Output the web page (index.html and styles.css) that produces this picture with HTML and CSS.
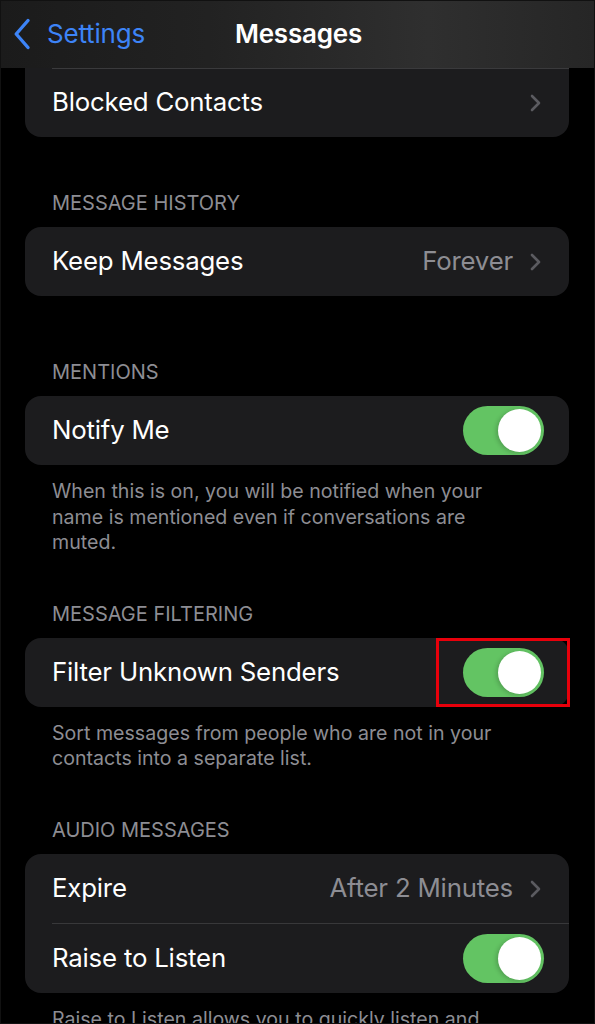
FILE: index.html
```html
<!DOCTYPE html>
<html lang="en">
<head>
<meta charset="utf-8">
<title>Messages</title>
<link rel="stylesheet" href="styles.css">
</head>
<body>
<header class="nav">
  <div class="back">
    <svg class="back-chev" viewBox="0 0 18 32" width="18" height="32"><path d="M15 2.5 L3.2 16 L15 29.5" fill="none" stroke="#3d84f7" stroke-width="3.4" stroke-linecap="round" stroke-linejoin="round"/></svg>
    <span class="back-label">Settings</span>
  </div>
  <h1 class="title">Messages</h1>
</header>

<main class="list">
  <section class="group group-first">
    <div class="card card-cut">
      <div class="row">
        <span class="label">Blocked Contacts</span>
        <span class="accessory"><svg class="chev" viewBox="0 0 11 18" width="11" height="18"><path d="M2 2 L9 9 L2 16" fill="none" stroke="#5b5b60" stroke-width="2.6" stroke-linecap="round" stroke-linejoin="round"/></svg></span>
      </div>
    </div>
  </section>

  <section class="group group-near">
    <h2 class="group-header">MESSAGE HISTORY</h2>
    <div class="card">
      <div class="row">
        <span class="label">Keep Messages</span>
        <span class="accessory"><span class="value">Forever</span><svg class="chev" viewBox="0 0 11 18" width="11" height="18"><path d="M2 2 L9 9 L2 16" fill="none" stroke="#5b5b60" stroke-width="2.6" stroke-linecap="round" stroke-linejoin="round"/></svg></span>
      </div>
    </div>
  </section>

  <section class="group group-wide">
    <h2 class="group-header">MENTIONS</h2>
    <div class="card">
      <div class="row">
        <span class="label">Notify Me</span>
        <span class="toggle"><span class="knob"></span></span>
      </div>
    </div>
    <p class="group-footer">When this is on, you will be notified when your name is mentioned even if conversations are muted.</p>
  </section>

  <section class="group group-after-footer">
    <h2 class="group-header">MESSAGE FILTERING</h2>
    <div class="card">
      <div class="row">
        <span class="label">Filter Unknown Senders</span>
        <span class="toggle"><span class="knob"></span></span>
        <span class="highlight"></span>
      </div>
    </div>
    <p class="group-footer">Sort messages from people who are not in your contacts into a separate list.</p>
  </section>

  <section class="group group-after-footer">
    <h2 class="group-header">AUDIO MESSAGES</h2>
    <div class="card">
      <div class="row row-sep">
        <span class="label">Expire</span>
        <span class="accessory"><span class="value">After 2 Minutes</span><svg class="chev" viewBox="0 0 11 18" width="11" height="18"><path d="M2 2 L9 9 L2 16" fill="none" stroke="#5b5b60" stroke-width="2.6" stroke-linecap="round" stroke-linejoin="round"/></svg></span>
      </div>
      <div class="row">
        <span class="label">Raise to Listen</span>
        <span class="toggle"><span class="knob"></span></span>
      </div>
    </div>
    <p class="group-footer">Raise to Listen allows you to quickly listen and reply to incoming audio messages by raising the phone to your ear.</p>
  </section>
</main>
</body>
</html>
```

FILE: styles.css
```css
* { box-sizing: border-box; }

html, body {
  margin: 0;
  padding: 0;
  background: #000;
}

body {
  width: 595px;
  height: 1024px;
  overflow: hidden;
  font-family: "Inter", "Noto Sans", sans-serif;
  color: #fff;
  border: 1px solid #111;
}

.nav {
  height: 67px;
  display: flex;
  align-items: center;
  justify-content: center;
  position: relative;
  background: linear-gradient(90deg, #1b1b1b 0%, #222 35%, #2f2f2f 72%, #262626 100%);
}

.back {
  position: absolute;
  left: 12px;
  top: 0;
  height: 67px;
  display: flex;
  align-items: center;
  gap: 16px;
}

.back-chev { display: block; margin-top: -2px; }

.back-label {
  color: #3d84f7;
  font-size: 26px;
  letter-spacing: -0.2px;
  margin-top: -2px;
}

.title {
  margin: 0 0 0 2px;
  font-size: 26px;
  font-weight: 600;
  letter-spacing: -0.2px;
  margin-top: -2px;
}

.list {
  padding: 0 25px 0 24px;
}

.group-first { margin-top: 0; }
.group-near { margin-top: 54px; }
.group-wide { margin-top: 64px; }
.group-after-footer { margin-top: 46px; }

.group-header {
  margin: 0 0 12px 0;
  padding-left: 27px;
  font-size: 20px;
  font-weight: 400;
  line-height: 24px;
  color: #8d8d93;
  letter-spacing: 0;
}

.card {
  background: #1c1c1e;
  border-radius: 16px;
}

.card-cut {
  border-radius: 0 0 16px 16px;
  position: relative;
}

.card-cut::before {
  content: "";
  position: absolute;
  top: 0;
  left: 27px;
  right: 0;
  height: 1px;
  background: #3a3a3c;
}

.row {
  position: relative;
  height: 69px;
  display: flex;
  align-items: center;
  justify-content: space-between;
  padding: 0 27px 0 27px;
}

.row-sep { height: 70px; }
.row-sep::after {
  content: "";
  position: absolute;
  left: 27px;
  right: 0;
  bottom: 0;
  height: 1px;
  background: #38383a;
}

.label {
  font-size: 25.8px;
  letter-spacing: -0.2px;
  margin-top: -2px;
}

.accessory {
  display: flex;
  align-items: center;
  gap: 17px;
  margin-right: 1px;
}

.value {
  color: #8d8d93;
  font-size: 25.8px;
  letter-spacing: -0.2px;
  margin-top: -2px;
}

.chev { display: block; }

.toggle {
  width: 81px;
  height: 49px;
  border-radius: 25px;
  background: #63c463;
  display: flex;
  align-items: center;
  justify-content: flex-end;
  padding-right: 3px;
  margin-right: -2px;
}

.knob {
  width: 43px;
  height: 43px;
  border-radius: 50%;
  background: #fff;
  box-shadow: -2px 1px 4px rgba(0,0,0,0.18);
}

.highlight {
  position: absolute;
  left: 411px;
  top: 0;
  width: 134px;
  height: 69px;
  border: 3px solid #e8000b;
}

.group-footer {
  margin: 0;
  padding: 14px 38px 0 27px;
  font-size: 19.6px;
  line-height: 25.5px;
  color: #8d8d93;
}
```
